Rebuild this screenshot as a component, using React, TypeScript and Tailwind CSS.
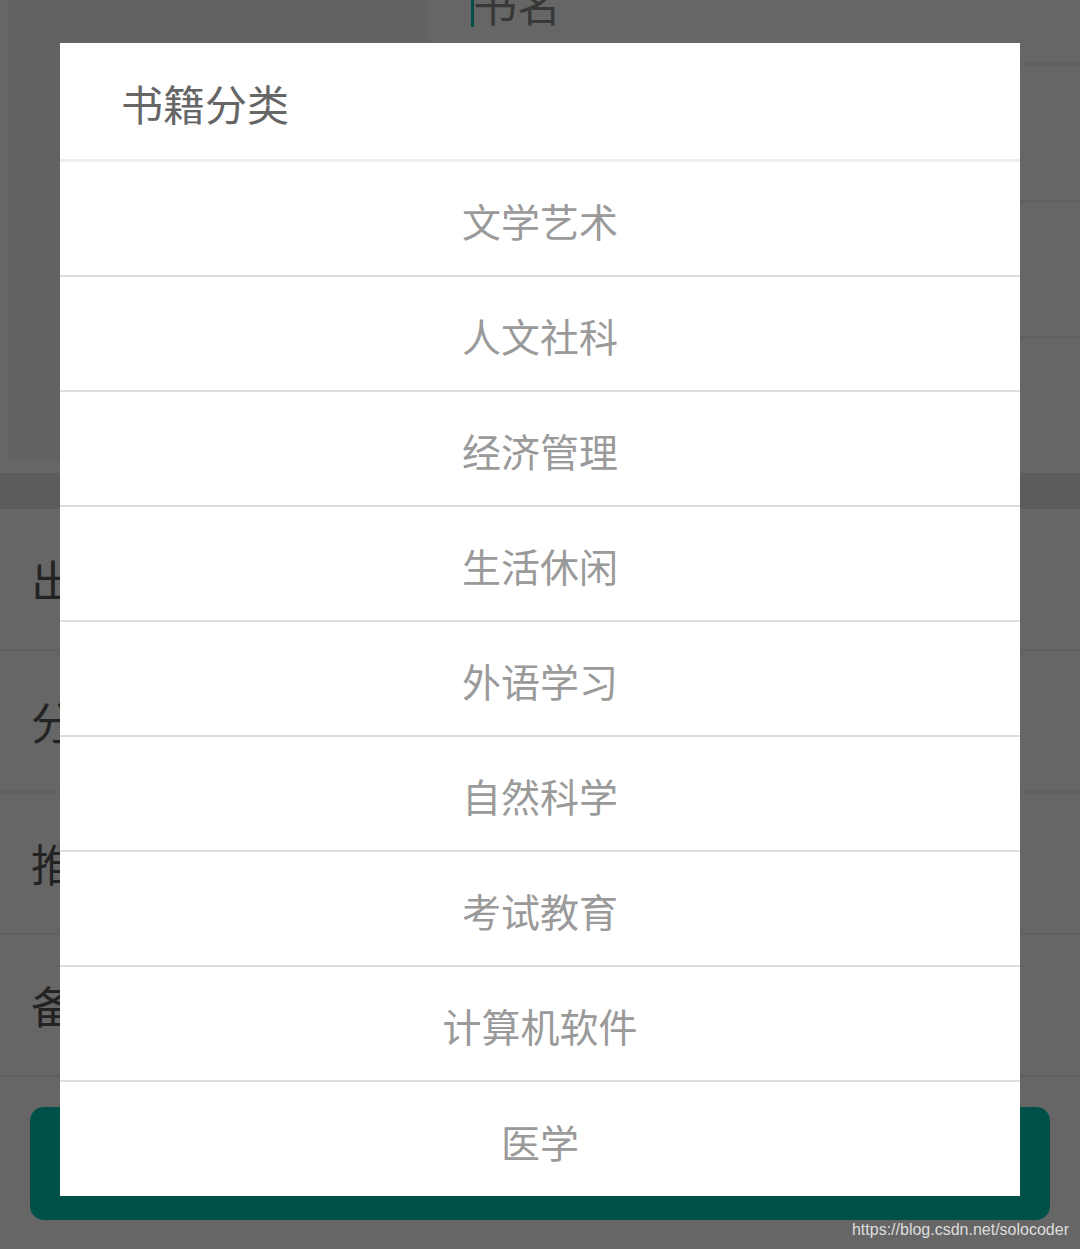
const CATEGORIES = [
  "文学艺术",
  "人文社科",
  "经济管理",
  "生活休闲",
  "外语学习",
  "自然科学",
  "考试教育",
  "计算机软件",
  "医学",
];

const FORM_ROWS = ["出版社", "分类", "推荐语", "备注"];

const cjk = { fontFamily: '"Noto Sans CJK SC", "Noto Sans", sans-serif' };

export default function App() {
  return (
    <div className="relative h-[1249px] w-full overflow-hidden bg-white" style={cjk}>
      {/* Underlying form page */}
      <div className="-mt-[72px] flex">
        <div className="ml-[9px] h-[533px] w-[419px] bg-[#f5f5f5]" />
        <div className="ml-[12px] flex flex-1 flex-col">
          <div className="flex h-[137px] items-center border-b-2 border-[#f0f0f0] pl-[31px] pt-[14px]">
            <span className="h-[48px] w-[3px] shrink-0 bg-[#00c8b9]" />
            <span className="-ml-[1px] text-[44px] leading-none text-[#8c8c8c]">书名</span>
          </div>
          <div className="h-[137px] border-b-2 border-[#f0f0f0]" />
          <div className="h-[136px] border-b-2 border-[#f0f0f0]" />
          <div className="h-[135px]" />
        </div>
      </div>
      <div className="h-[36px] bg-[#e6e6e6]" />
      {FORM_ROWS.map((label) => (
        <div
          key={label}
          className="flex h-[142px] items-center border-b-2 border-[#f0f0f0] pl-[31px] text-[44px] text-[#595959]"
        >
          {label}
        </div>
      ))}
      <div className="mx-[30px] mt-[30px] h-[113px] rounded-[14px] bg-[#00c8b9]" />

      {/* Dim overlay + category dialog */}
      <div className="absolute inset-0 flex justify-center bg-black/60 pt-[43px]">
        <div className="flex h-[1153px] w-[960px] flex-col bg-white">
          <div className="flex h-[119px] shrink-0 items-center border-b-[3px] border-[#eeeeee] pl-[61px] pt-[2px] text-[42px] text-[#666666]">
            书籍分类
          </div>
          {CATEGORIES.map((name, i) => (
            <div
              key={name}
              className={`flex h-[115px] shrink-0 items-center justify-center pt-[4px] text-[39px] text-[#9a9a9a] ${
                i < CATEGORIES.length - 1 ? "border-b-2 border-[#dddddd]" : ""
              }`}
            >
              {name}
            </div>
          ))}
        </div>
      </div>

      <div
        className="absolute bottom-[10px] right-[11px] text-[16px] leading-[18px] text-[#dedede]"
        style={{ fontFamily: '"Liberation Sans", Arial, sans-serif' }}
      >
        https://blog.csdn.net/solocoder
      </div>
    </div>
  );
}
